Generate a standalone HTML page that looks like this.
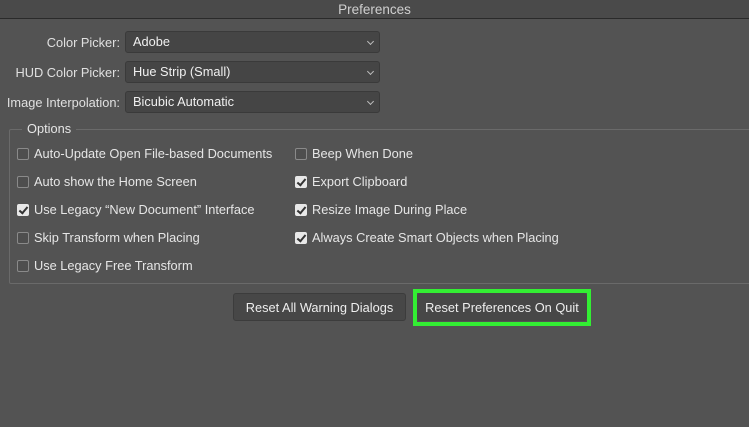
<!DOCTYPE html>
<html><head><meta charset="utf-8"><style>
*{margin:0;padding:0;box-sizing:border-box}
body{width:749px;height:427px;background:#535353;font-family:"Liberation Sans",sans-serif;color:#e6e6e6;font-size:12.8px;position:relative;overflow:hidden}
.title{position:absolute;left:0;top:0;width:749px;height:19px;background:#4a4a4a;border-bottom:1px solid #2a2a2a;text-align:center;font-size:13.5px;line-height:19px;color:#cfcfcf}
.lbl{position:absolute;right:629px;text-align:right;white-space:nowrap;line-height:22px;color:#e0e0e0}
.sel{position:absolute;left:125px;width:255px;height:22px;background:#454545;border:1px solid #3a3a3a;border-radius:3px;padding-left:7px;line-height:20px;color:#f0f0f0}
.sel:after{content:"";position:absolute;right:6px;top:7px;width:4px;height:4px;border-right:1px solid #bbb;border-bottom:1px solid #bbb;transform:rotate(45deg)}
.box{position:absolute;left:9px;top:129px;width:760px;height:155px;border:1px solid #6a6a6a;border-radius:2px}
.legend{position:absolute;left:22px;top:121px;background:#535353;padding:0 5px;line-height:16px;color:#e6e6e6}
.cb{position:absolute;white-space:nowrap;line-height:16px}
.cb i{display:inline-block;width:12px;height:12px;border:1px solid #8a8a8a;border-radius:2px;vertical-align:-2px;margin-right:5px;background:#4e4e4e;position:relative}
.cb i.on{background:#e8e8e8;border-color:#e8e8e8}
.cb i.on:after{content:"";position:absolute;left:3px;top:0px;width:3px;height:7px;border-right:2px solid #333;border-bottom:2px solid #333;transform:rotate(40deg)}
.btn{position:absolute;height:28px;background:#474747;border:1px solid #3c3c3c;border-radius:3px;text-align:center;line-height:27px;color:#eee}
</style></head><body>
<div class="title">Preferences</div>
<div class="lbl" style="top:32px">Color Picker:</div>
<div class="sel" style="top:31px">Adobe</div>
<div class="lbl" style="top:62px">HUD Color Picker:</div>
<div class="sel" style="top:61px">Hue Strip (Small)</div>
<div class="lbl" style="top:92px">Image Interpolation:</div>
<div class="sel" style="top:91px">Bicubic Automatic</div>
<div class="box"></div>
<div class="legend">Options</div>
<div class="cb" style="left:17px;top:146px"><i></i>Auto-Update Open File-based Documents</div>
<div class="cb" style="left:17px;top:174px"><i></i>Auto show the Home Screen</div>
<div class="cb" style="left:17px;top:202px"><i class="on"></i>Use Legacy “New Document” Interface</div>
<div class="cb" style="left:17px;top:230px"><i></i>Skip Transform when Placing</div>
<div class="cb" style="left:17px;top:258px"><i></i>Use Legacy Free Transform</div>
<div class="cb" style="left:295px;top:146px"><i></i>Beep When Done</div>
<div class="cb" style="left:295px;top:174px"><i class="on"></i>Export Clipboard</div>
<div class="cb" style="left:295px;top:202px"><i class="on"></i>Resize Image During Place</div>
<div class="cb" style="left:295px;top:230px"><i class="on"></i>Always Create Smart Objects when Placing</div>
<div class="btn" style="left:233px;top:293px;width:173px">Reset All Warning Dialogs</div>
<div style="position:absolute;left:413px;top:289px;width:178px;height:37px;border:4px solid #33ee33"></div>
<div class="btn" style="left:417px;top:293px;width:170px;border:none;line-height:29px">Reset Preferences On Quit</div>
</body></html>
